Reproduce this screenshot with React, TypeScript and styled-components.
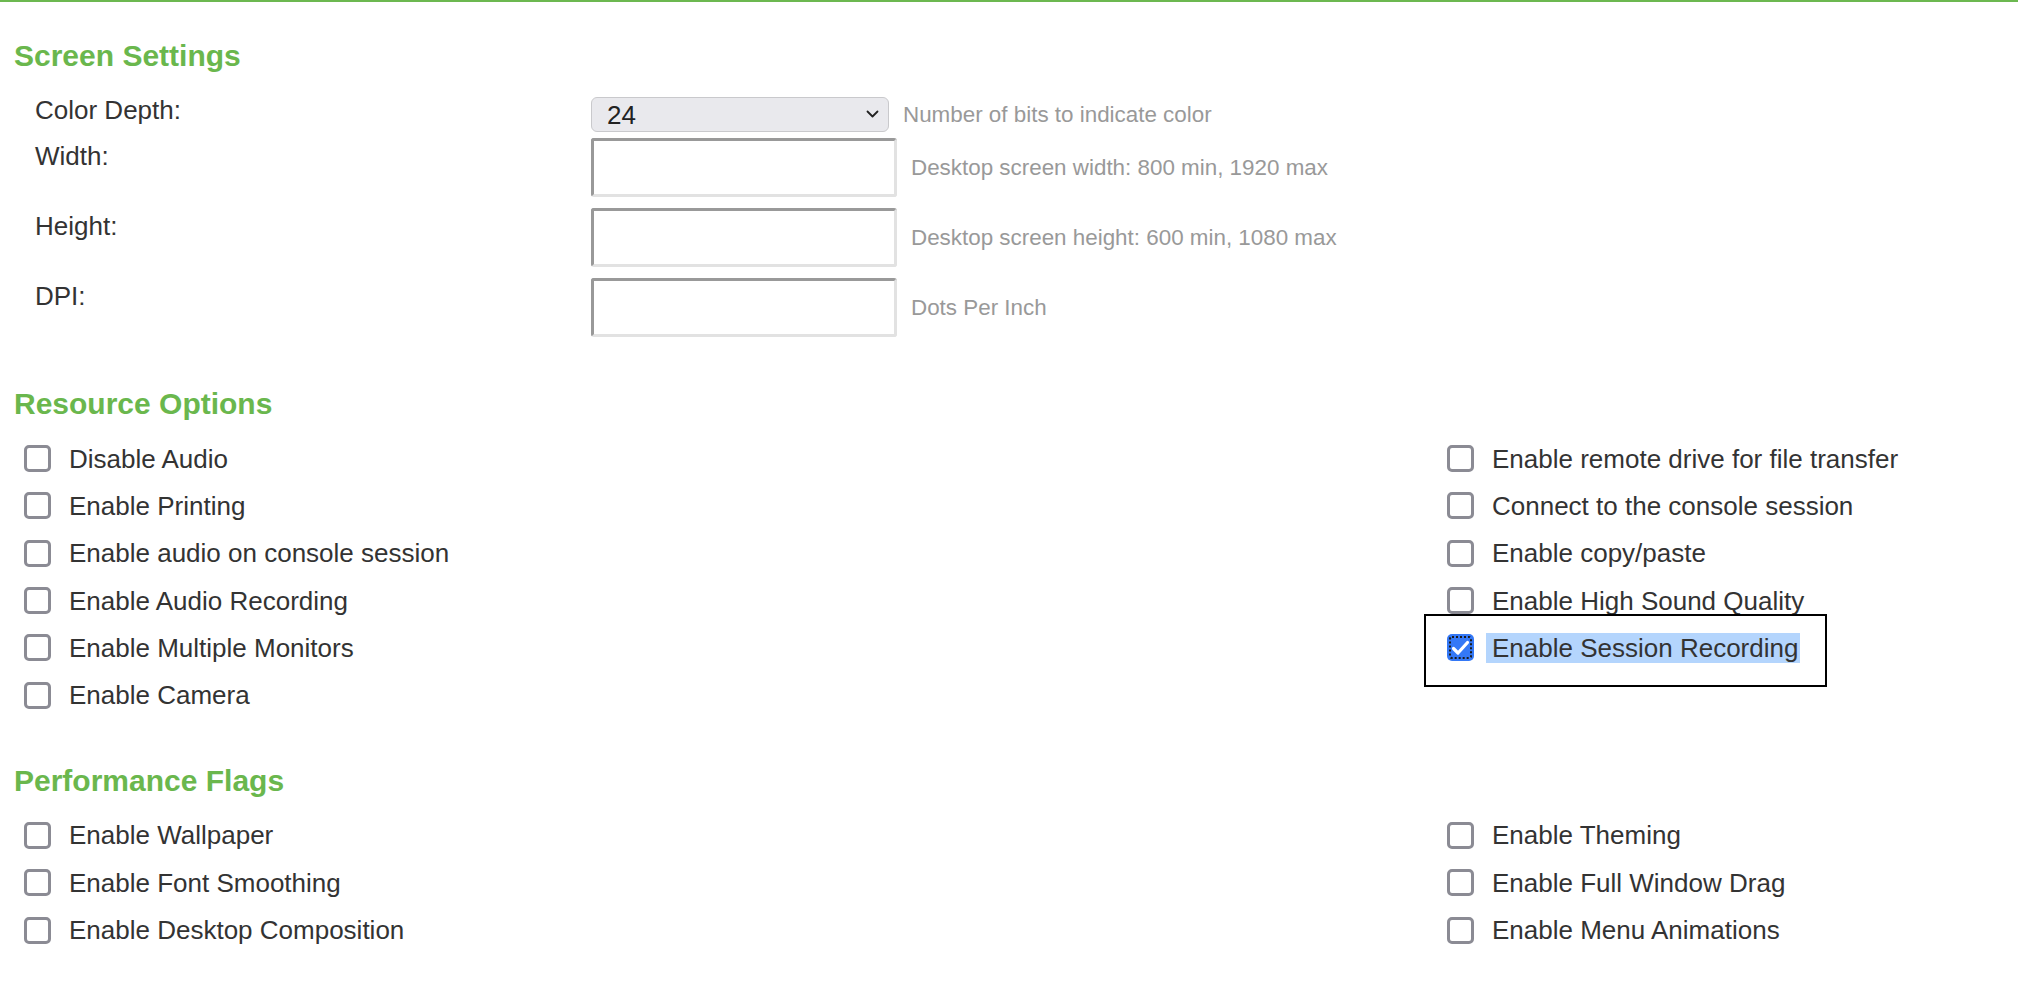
import React from 'react';
import styled, { createGlobalStyle } from 'styled-components';

const GlobalStyle = createGlobalStyle`
    html, body {
        margin: 0;
        padding: 0;
        background: #fff;
    }
    body {
        font-family: 'Liberation Sans', Arial, Helvetica, sans-serif;
        color: #333;
    }
`;

type Field = {
    label: string;
    hint: string;
    kind: 'select' | 'input';
};

const fields: Field[] = [
    { label: 'Color Depth:', hint: 'Number of bits to indicate color', kind: 'select' },
    { label: 'Width:', hint: 'Desktop screen width: 800 min, 1920 max', kind: 'input' },
    { label: 'Height:', hint: 'Desktop screen height: 600 min, 1080 max', kind: 'input' },
    { label: 'DPI:', hint: 'Dots Per Inch', kind: 'input' },
];

type Option = { label: string; checked?: boolean; focused?: boolean };

// two columns, listed row by row
const resourceOptions: Option[] = [
    { label: 'Disable Audio' },
    { label: 'Enable remote drive for file transfer' },
    { label: 'Enable Printing' },
    { label: 'Connect to the console session' },
    { label: 'Enable audio on console session' },
    { label: 'Enable copy/paste' },
    { label: 'Enable Audio Recording' },
    { label: 'Enable High Sound Quality' },
    { label: 'Enable Multiple Monitors' },
    { label: 'Enable Session Recording', checked: true, focused: true },
    { label: 'Enable Camera' },
];

const performanceFlags: Option[] = [
    { label: 'Enable Wallpaper' },
    { label: 'Enable Theming' },
    { label: 'Enable Font Smoothing' },
    { label: 'Enable Full Window Drag' },
    { label: 'Enable Desktop Composition' },
    { label: 'Enable Menu Animations' },
];

const CheckItem = ({ option }: { option: Option }) => (
    <CheckRow>
        <Box $checked={!!option.checked}>
            {option.checked && (
                <svg width='19' height='16' viewBox='0 0 19 16'>
                    <path
                        d='M2.5 8.5 L7 13 L16.5 2.5'
                        fill='none'
                        stroke='#fff'
                        strokeWidth='3.2'
                        strokeLinecap='round'
                        strokeLinejoin='round'
                    />
                </svg>
            )}
        </Box>
        <CheckLabel $selected={!!option.focused}>{option.label}</CheckLabel>
        {option.focused && <FocusFrame />}
    </CheckRow>
);

const App = () => {
    return (
        <>
            <GlobalStyle />
            <Page>
                <SectionTitle $top={37}>Screen Settings</SectionTitle>
                <FieldTable>
                    {fields.map((field, i) => (
                        <FieldRow
                            key={field.label}
                            $gap={i === 0 ? 0 : i === 1 ? 6 : 11}
                            $height={field.kind === 'select' ? 40 : 59}
                        >
                            <FieldLabel>{field.label}</FieldLabel>
                            <Control $pad={field.kind === 'select' ? 5 : 0}>
                                {field.kind === 'select' ? (
                                    <SelectWrap>
                                        <Select defaultValue='24'>
                                            <option value='8'>8</option>
                                            <option value='16'>16</option>
                                            <option value='24'>24</option>
                                            <option value='32'>32</option>
                                        </Select>
                                        <Chevron width='13' height='8' viewBox='0 0 13 8'>
                                            <path
                                                d='M1.5 1.5 L6.5 6.5 L11.5 1.5'
                                                fill='none'
                                                stroke='#222'
                                                strokeWidth='1.8'
                                                strokeLinecap='round'
                                                strokeLinejoin='round'
                                            />
                                        </Chevron>
                                    </SelectWrap>
                                ) : (
                                    <TextInput type='text' />
                                )}
                                <Hint>{field.hint}</Hint>
                            </Control>
                        </FieldRow>
                    ))}
                </FieldTable>

                <SectionTitle $top={50}>Resource Options</SectionTitle>
                <CheckGrid>
                    {resourceOptions.map((option) => (
                        <CheckItem key={option.label} option={option} />
                    ))}
                </CheckGrid>

                <SectionTitle $top={45}>Performance Flags</SectionTitle>
                <CheckGrid>
                    {performanceFlags.map((option) => (
                        <CheckItem key={option.label} option={option} />
                    ))}
                </CheckGrid>
            </Page>
        </>
    );
};

const Page = styled.div`
    border-top: 2px solid #6cb850;
    padding: 0 14px 40px 14px;
    min-height: 990px;
`;

const SectionTitle = styled.h2<{ $top: number }>`
    margin: ${(p) => p.$top}px 0 0 0;
    font-size: 30px;
    line-height: 34px;
    font-weight: bold;
    color: #6ab74d;
`;

const FieldTable = styled.div`
    display: flex;
    flex-direction: column;
    margin-top: 19px;
`;

const FieldRow = styled.div<{ $gap: number; $height: number }>`
    display: grid;
    grid-template-columns: 577px 1fr;
    margin-top: ${(p) => p.$gap}px;
    height: ${(p) => p.$height}px;
`;

const FieldLabel = styled.div`
    padding: 3px 0 0 21px;
    font-size: 26px;
    line-height: 30px;
    color: #333;
`;

const Control = styled.div<{ $pad: number }>`
    box-sizing: border-box;
    display: flex;
    align-items: center;
    align-self: stretch;
    padding-top: ${(p) => p.$pad}px;
`;

const SelectWrap = styled.div`
    position: relative;
    display: flex;
`;

const Select = styled.select`
    appearance: none;
    -webkit-appearance: none;
    width: 298px;
    height: 35px;
    padding: 0 0 0 15px;
    border: 1px solid #c9c9cc;
    border-radius: 6px;
    background: #e9e9ed;
    font-family: 'Liberation Sans', Arial, sans-serif;
    font-size: 26px;
    color: #222;
    outline: none;
`;

const Chevron = styled.svg`
    position: absolute;
    right: 10px;
    top: 13px;
    pointer-events: none;
`;

const TextInput = styled.input`
    box-sizing: border-box;
    width: 306px;
    height: 59px;
    border-style: solid;
    border-width: 3px;
    border-color: #999 #e2e2e2 #e2e2e2 #999;
    border-radius: 3px;
    background: #fff;
    font-family: 'Liberation Sans', Arial, sans-serif;
    font-size: 26px;
    outline: none;
`;

const Hint = styled.span`
    margin-left: 14px;
    font-size: 22.4px;
    color: #999;
    white-space: nowrap;
`;

const CheckGrid = styled.div`
    display: grid;
    grid-template-columns: 1423px 1fr;
    grid-auto-rows: 47.3px;
    margin: 14px 0 0 10px;
`;

const CheckRow = styled.label`
    position: relative;
    display: flex;
    align-items: center;
    font-size: 26px;
    color: #333;
`;

const Box = styled.span<{ $checked: boolean }>`
    box-sizing: border-box;
    flex: none;
    display: flex;
    align-items: center;
    justify-content: center;
    width: 27px;
    height: 27px;
    border-radius: 5px;
    border: ${(p) => (p.$checked ? 'none' : '3px solid #8b8b94')};
    background: ${(p) => (p.$checked ? '#3478f6' : '#fff')};
    outline: ${(p) => (p.$checked ? '2px dotted #1b1b1b' : 'none')};
    outline-offset: -4px;
`;

const CheckLabel = styled.span<{ $selected: boolean }>`
    margin-left: 12px;
    padding: 0 2px 0 6px;
    line-height: 30px;
    white-space: nowrap;
    background: ${(p) => (p.$selected ? '#b4d5fd' : 'transparent')};
`;

const FocusFrame = styled.span`
    position: absolute;
    left: -23px;
    top: -10px;
    width: 403px;
    height: 73px;
    box-sizing: border-box;
    border: 2px solid #000;
    pointer-events: none;
`;

export default App;
